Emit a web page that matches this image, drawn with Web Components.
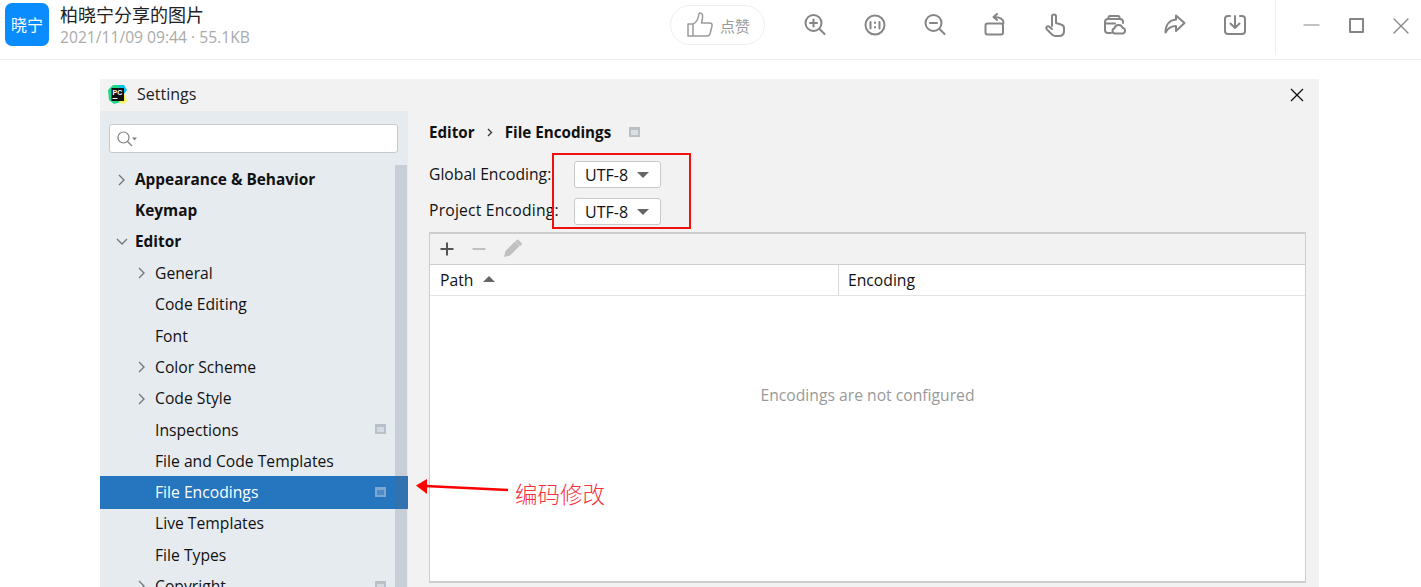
<!DOCTYPE html>
<html>
<head>
<meta charset="utf-8">
<title>Settings</title>
<style>
  html, body { margin: 0; padding: 0; background: #fff; height: 587px; overflow: hidden; }
  body { font-family: "Open Sans", "Noto Sans CJK SC", sans-serif; }
</style>
</head>
<body>
<viewer-page></viewer-page>

<script>
const ICONS = {
  zoomin: `<circle cx="10.500" cy="10" r="8"/><path d="M7 10h7M10.500 6.500v7M16.500 16l5 5"/>`,
  actual: `<circle cx="12" cy="12" r="9.500"/><path d="M7.500 9v6.500M16.500 9v6.500M12 9.500v.6M12 14v.6"/>`,
  zoomout: `<circle cx="10.500" cy="10" r="8"/><path d="M7 10h7M16.500 16l5 5"/>`,
  rotate: `<rect x="2.500" y="10.500" width="17.500" height="11" rx="2"/><path d="M20.500 10C20.500 6 17 4 10.500 4M14 1 10.500 4l3.500 3"/>`,
  hand: `<path d="M9 13V3.500a2 2 0 0 1 4 0V10l5 1.500c2 .5 3 1.500 3 3.500v3c0 3-2 5-5 5h-4c-2 0-3-1-4-2.500L3.500 16c-1-1.500 1-3.500 2.500-2.500L9 16"/>`,
  cloud: `<path d="M5.500 6V4.500A1.500 1.500 0 0 1 7 3h8a1.500 1.500 0 0 1 1.500 1.500V6"/><path d="M8 20H5a3 3 0 0 1-3-3V9a3 3 0 0 1 3-3h12a3 3 0 0 1 3 3v1M2 10.500h10"/><path d="M12 20.500a2.700 2.700 0 0 1-.5-5.300 4.200 4.200 0 0 1 8-.5 3 3 0 0 1 .5 5.800z"/>`,
  share: `<path d="M13 2.500l8.500 7.500-8.500 8v-5C8 13 5 15 2.500 19.500c0-7.500 4-12.500 10.500-13z"/>`,
  save: `<path d="M7 3H5a3 3 0 0 0-3 3v12a3 3 0 0 0 3 3h14a3 3 0 0 0 3-3V6a3 3 0 0 0-3-3h-2M12 3v12M7.500 10.500 12 15l4.500-4.500"/>`,
  min: `<path d="M2 9h15"/>`,
  max: `<rect x="3" y="3" width="13" height="13"/>`,
  close: `<path d="M2 3l14 14M16 3 2 17"/>`
};

class UiIcon extends HTMLElement {
  connectedCallback() {
    const size = this.getAttribute("size") || 24;
    const stroke = this.getAttribute("stroke") || 2;
    const box = this.getAttribute("box") || 24;
    this.attachShadow({mode: "open"}).innerHTML = `
      <style>
        :host { display: block; width: ${size}px; height: ${size}px; color: #858585; }
        svg { display: block; fill: none; stroke: currentColor; stroke-width: ${stroke}; stroke-linejoin: round; stroke-linecap: round; }
      </style>
      <svg width="${size}" height="${size}" viewBox="0 0 ${box} ${box}">${ICONS[this.getAttribute("name")]}</svg>`;
  }
}
customElements.define("ui-icon", UiIcon);

class TopBar extends HTMLElement {
  constructor() {
    super();
    this.shadowDOM = this.attachShadow({mode: "open"});
    this.shadowDOM.innerHTML = `
      <style>
        :host { display: flex; height: 59px; border-bottom: 1px solid #eee; box-sizing: content-box; background: #fff; font-family: "Liberation Sans", "Noto Sans CJK SC", sans-serif; }
        .avatar { width: 44px; height: 43px; margin: 3px 0 0 5px; border-radius: 7px; background: #0a8cff; color: #fff; font: 16px/43px "Noto Sans CJK SC", sans-serif; text-align: center; }
        .info { margin-left: 11px; width: 610px; }
        .name { font: 18px/24px "Noto Sans CJK SC", sans-serif; color: #222; margin-top: 2px; }
        .meta { font: 15.650px/18px "Open Sans", sans-serif; color: #aaa; margin-top: 2px; }
        .like { width: 95px; height: 40px; margin-top: 5px; box-sizing: border-box; border: 1px solid #eee; border-radius: 20px; display: flex; align-items: center; padding-left: 15px; gap: 6px; color: #999; font: 15px "Noto Sans CJK SC", sans-serif; }
        .tools { display: flex; gap: 36px; margin-left: 38px; padding-top: 13px; }
        .divider { width: 1px; height: 55px; background: #eee; margin-left: 28px; }
        .win { display: flex; gap: 26px; padding: 16px 0 0 26px; }
      </style>
      <div class="avatar">晓宁</div>
      <div class="info">
        <div class="name">柏晓宁分享的图片</div>
        <div class="meta">2021/11/09 09:44 · 55.1KB</div>
      </div>
      <div class="like">
        <svg width="28" height="28" viewBox="0 0 28 28" fill="none" stroke="#9a9a9a" stroke-width="1.500" stroke-linejoin="round"><path d="M2 13h5v12H2zM7 13c3-1 5-4 6-10 0-1.500 3-1.500 3.500 1 .5 2.500-.5 6-1 8h8c2 0 3 1 2.500 3l-2 8c-.5 1.500-1.500 2-3 2H7"/></svg>
        <span>点赞</span>
      </div>
      <div class="tools">
        <ui-icon name="zoomin"></ui-icon>
        <ui-icon name="actual"></ui-icon>
        <ui-icon name="zoomout"></ui-icon>
        <ui-icon name="rotate"></ui-icon>
        <ui-icon name="hand"></ui-icon>
        <ui-icon name="cloud"></ui-icon>
        <ui-icon name="share"></ui-icon>
        <ui-icon name="save"></ui-icon>
      </div>
      <div class="divider"></div>
      <div class="win">
        <ui-icon name="min" size="19" box="19" stroke="1.200"></ui-icon>
        <ui-icon name="max" size="19" box="19" stroke="2"></ui-icon>
        <ui-icon name="close" size="19" box="19" stroke="1.300"></ui-icon>
      </div>`;
  }
}
customElements.define("top-bar", TopBar);

class TreeRow extends HTMLElement {
  constructor() {
    super();
    this.shadowDOM = this.attachShadow({mode: "open"});
  }
  connectedCallback() {
    const level = +this.getAttribute("level") || 0;
    const arrow = this.getAttribute("arrow");
    const selected = this.hasAttribute("selected");
    const bold = this.hasAttribute("bold");
    const chevron = arrow === "open" ? "M1 3l5 5 5-5" : "M3 1l5 5-5 5";
    this.shadowDOM.innerHTML = `
      <style>
        :host { display: flex; align-items: center; position: relative; height: 31.300px; padding-left: ${35 + level * 20}px; font-size: ${bold ? 15.400 : 15.700}px; color: #111; ${bold ? "font-weight: 700;" : ""} ${selected ? "background: rgb(38,117,191); box-shadow: 0 1px 0 rgb(38,117,191); color: #fff; width: 308px;" : ""} box-sizing: border-box; }
        svg.arrow { position: absolute; left: ${16 + level * 20}px; top: 10px; }
        svg.page { position: absolute; left: 275px; top: 10.500px; }
      </style>
      ${arrow ? `<svg class="arrow" width="12" height="12" viewBox="0 0 12 12" fill="none" stroke="#757575" stroke-width="1.300"><path d="${chevron}"/></svg>` : ""}
      <slot></slot>
      ${this.hasAttribute("page") ? `<svg class="page" width="11" height="10" viewBox="0 0 11 10"><rect width="11" height="10" fill="${selected ? "#7ea8d0" : "#b8c0c8"}"/><rect x="2" y="3" width="7" height="5" fill="${selected ? "#4f8ac8" : "#d4dae0"}"/></svg>` : ""}`;
  }
}
customElements.define("tree-row", TreeRow);

class SideBar extends HTMLElement {
  constructor() {
    super();
    this.shadowDOM = this.attachShadow({mode: "open"});
    this.shadowDOM.innerHTML = `
      <style>
        :host { display: block; position: relative; width: 308px; background: #e6ebf0; flex: none; overflow: hidden; }
        .search { height: 29px; margin: 13px 10px 0 9px; box-sizing: border-box; background: #fff; border: 1px solid #c5c9cc; border-radius: 3px; padding: 6px 0 0 7px; }
        .tree { margin-top: 10.500px; }
        .scroll { position: absolute; left: 295px; top: 54px; bottom: 0; width: 12px; background: rgba(95,105,118,.22); }
      </style>
      <div class="search">
        <svg width="24" height="18" viewBox="0 0 24 18" fill="none" stroke="#7f7f7f" stroke-width="1.200" style="display:block"><circle cx="6.500" cy="6.500" r="5.500"/><path d="M10.500 10.500 15 15"/><path d="M15 6.500h5l-2.500 3z" fill="#7f7f7f" stroke="none"/></svg>
      </div>
      <div class="tree"><slot></slot></div>
      <div class="scroll"></div>`;
  }
}
customElements.define("side-bar", SideBar);

class ComboBox extends HTMLElement {
  constructor() {
    super();
    this.attachShadow({mode: "open"}).innerHTML = `
      <style>
        :host { display: flex; align-items: center; box-sizing: border-box; width: 87px; height: 27px; padding-left: 10px; background: #fff; border: 1px solid #c9c9c9; border-radius: 3px; font-size: 16px; color: #111; }
        i { margin-left: 9px; width: 0; height: 0; border: 6px solid transparent; border-top: 6px solid #666; border-bottom: 0; }
      </style>
      <slot></slot><i></i>`;
  }
}
customElements.define("combo-box", ComboBox);

class EncodingTable extends HTMLElement {
  constructor() {
    super();
    this.attachShadow({mode: "open"}).innerHTML = `
      <style>
        :host { display: flex; flex-direction: column; box-sizing: border-box; width: 877px; height: 351px; border: 2px solid #cdcdcd; border-width: 2px 1px 2px 1px; background: #fff; font-size: 15.700px; color: #111; }
        .bar { height: 30px; flex: none; background: #f2f2f2; border-bottom: 1px solid #cdcdcd; display: flex; align-items: center; gap: 16px; padding-left: 9px; }
        .head { height: 30px; display: flex; align-items: center; border-bottom: 1px solid #e3e3e3; flex: none; }
        .path { box-sizing: border-box; width: 408px; padding-left: 10px; display: flex; align-items: center; gap: 10px; height: 100%; }
        .path i { width: 0; height: 0; border: 6px solid transparent; border-bottom: 6px solid #666; border-top: 0; margin-top: -2px; }
        .enc { box-sizing: border-box; border-left: 1px solid #d9d9d9; padding-left: 9px; height: 100%; display: flex; align-items: center; }
        .empty { flex: 1; display: flex; align-items: center; justify-content: center; color: #999; padding-bottom: 87px; }
      </style>
      <div class="bar">
        <svg width="16" height="16" viewBox="0 0 16 16" stroke="#555" stroke-width="2"><path d="M1.500 8h13M8 1.500v13"/></svg>
        <svg width="16" height="16" viewBox="0 0 16 16" stroke="#c0c0c0" stroke-width="2"><path d="M1.500 8h13"/></svg>
        <svg width="20" height="20" viewBox="0 0 20 20" fill="#c0c0c0"><path d="M1 18l1.500-6L12 2.500l4.500 4.500L7 16.500zM13.500 1l1.500-.5 4 4-.5 1.500-1.500 1-4.500-4.500z"/></svg>
      </div>
      <div class="head">
        <div class="path">Path <i></i></div>
        <div class="enc">Encoding</div>
      </div>
      <div class="empty">Encodings are not configured</div>`;
  }
}
customElements.define("encoding-table", EncodingTable);

class EncodingPanel extends HTMLElement {
  constructor() {
    super();
    this.attachShadow({mode: "open"}).innerHTML = `
      <style>
        :host { display: block; flex: 1; padding: 11px 0 0 21px; font-size: 15.700px; color: #111; background: #f2f2f2; }
        .crumb { display: flex; align-items: center; height: 20px; font-weight: 700; font-size: 15.200px; }
        .crumb svg { flex: none; }
        .row { display: flex; align-items: center; height: 27px; }
        .row span { width: 145px; padding-bottom: 2px; }
        .row span.wide { letter-spacing: .2px; padding-bottom: 4px; }
        encoding-table { margin-top: 7px; }
      </style>
      <div class="crumb">
        <span>Editor</span>
        <svg style="margin:0 12px" width="6" height="9" viewBox="0 0 6 9" fill="none" stroke="#333" stroke-width="1.300"><path d="M1 1l3.500 3.500L1 8"/></svg>
        <span>File Encodings</span>
        <svg style="margin-left:18px" width="11" height="10" viewBox="0 0 11 10"><rect width="11" height="10" fill="#b8c0c8"/><rect x="2" y="3" width="7" height="5" fill="#dcdfe2"/></svg>
      </div>
      <div class="row" style="margin-top:19px"><span>Global Encoding:</span><combo-box>UTF-8</combo-box></div>
      <div class="row" style="margin-top:10px"><span class="wide">Project Encoding:</span><combo-box>UTF-8</combo-box></div>
      <encoding-table></encoding-table>`;
  }
}
customElements.define("encoding-panel", EncodingPanel);

class SettingsWindow extends HTMLElement {
  constructor() {
    super();
    this.attachShadow({mode: "open"}).innerHTML = `
      <style>
        :host { display: flex; flex-direction: column; width: 1219px; height: 508px; margin: 19px 0 0 100px; background: #f2f2f2; overflow: hidden; font-family: "Open Sans", sans-serif; }
        .title { height: 32px; flex: none; box-sizing: border-box; padding: 0 0 2px 7px; display: flex; align-items: center; font-size: 16px; color: #222; position: relative; }
        .title span { margin-left: 9px; }
        .title .x { position: absolute; right: 15px; top: 9px; }
        .body { flex: 1; display: flex; min-height: 0; }
      </style>
      <div class="title">
        <svg width="21" height="21" viewBox="0 0 21 21"><path d="M1 6 6 1h8l3 3-3 14-7 2-5-4z" fill="#21d789"/><path d="M11 1h6l3 5-3 4z" fill="#07c3f2"/><path d="M12 18l5-8 3 7-4 3z" fill="#fcf84a"/><rect x="4.500" y="4" width="12.500" height="13" fill="#111"/><text x="5.500" y="10.500" font-family="Liberation Sans" font-size="7" font-weight="700" fill="#fff">PC</text><rect x="5.500" y="14" width="5" height="1" fill="#fff"/></svg>
        <span>Settings</span>
        <svg class="x" width="14" height="14" viewBox="0 0 14 14" stroke="#111" stroke-width="1.300"><path d="M1 1l12 12M13 1 1 13"/></svg>
      </div>
      <div class="body">
        <side-bar>
          <tree-row arrow="closed" bold>Appearance &amp; Behavior</tree-row>
          <tree-row bold>Keymap</tree-row>
          <tree-row arrow="open" bold>Editor</tree-row>
          <tree-row level="1" arrow="closed">General</tree-row>
          <tree-row level="1">Code Editing</tree-row>
          <tree-row level="1">Font</tree-row>
          <tree-row level="1" arrow="closed">Color Scheme</tree-row>
          <tree-row level="1" arrow="closed">Code Style</tree-row>
          <tree-row level="1" page>Inspections</tree-row>
          <tree-row level="1">File and Code Templates</tree-row>
          <tree-row level="1" page selected>File Encodings</tree-row>
          <tree-row level="1">Live Templates</tree-row>
          <tree-row level="1">File Types</tree-row>
          <tree-row level="1" arrow="closed" page>Copyright</tree-row>
        </side-bar>
        <encoding-panel></encoding-panel>
      </div>`;
  }
}
customElements.define("settings-window", SettingsWindow);

// red marks drawn over the screenshot
class RedNotes extends HTMLElement {
  constructor() {
    super();
    this.attachShadow({mode: "open"}).innerHTML = `
      <style>
        :host { display: block; position: absolute; left: 0; top: 0; width: 1421px; height: 587px; pointer-events: none; }
        .box { position: absolute; left: 552px; top: 153px; width: 135px; height: 72px; border: 2px solid #f01010; }
        svg { position: absolute; left: 410px; top: 475px; }
        .note { position: absolute; left: 515px; top: 477px; font: 300 22.500px/32px "Noto Sans CJK SC", sans-serif; color: #f5333f; }
      </style>
      <div class="box"></div>
      <svg width="110" height="24" viewBox="0 0 110 24"><path d="M15 11 98 15" stroke="#f00" stroke-width="2.500" fill="none"/><path d="M6 10.500 17 4v15z" fill="#f00"/></svg>
      <div class="note">编码修改</div>`;
  }
}
customElements.define("red-notes", RedNotes);

class ViewerPage extends HTMLElement {
  constructor() {
    super();
    this.attachShadow({mode: "open"}).innerHTML = `
      <style>:host { display: block; position: relative; width: 1421px; height: 587px; overflow: hidden; }</style>
      <top-bar></top-bar>
      <settings-window></settings-window>
      <red-notes></red-notes>`;
  }
}
customElements.define("viewer-page", ViewerPage);
</script>
</body>
</html>
